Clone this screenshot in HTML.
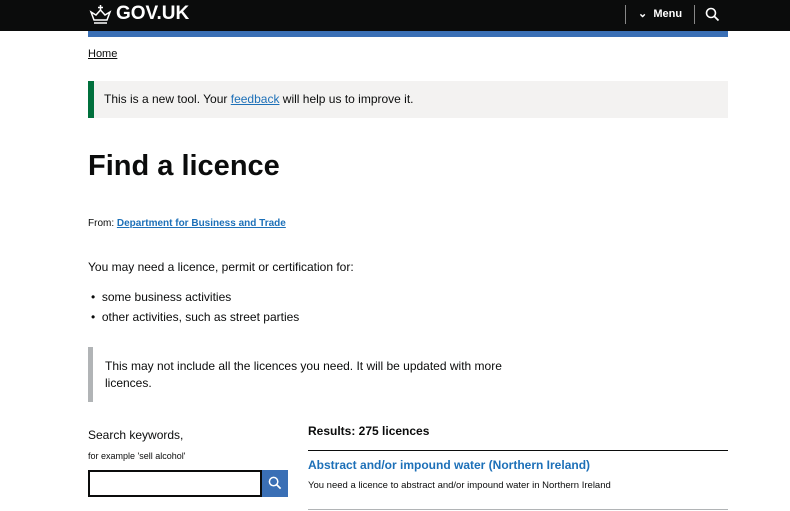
<!DOCTYPE html>
<html><head><style>
*{margin:0;padding:0;box-sizing:border-box}
body{width:790px;height:511px;overflow:hidden;background:#fff;font-family:"Liberation Sans",Arial,sans-serif;color:#0b0c0c;position:relative}
.a{position:absolute}
a{color:#1d70b8;text-decoration:underline}
</style></head><body>
<div class="a" style="left:0;top:0;width:790px;height:31px;background:#0b0c0c"></div>
<div class="a" style="left:88px;top:31px;width:640px;height:6px;background:#3a6fb5"></div>
<svg class="a" style="left:88px;top:5px" width="25" height="20" viewBox="0 0 25 20"><g fill="none" stroke="#fff" stroke-width="1.5"><path d="M3 7 L6 15 H19 L22 7 L17 10 L12.5 5 L8 10 Z"/><path d="M6 18 H19"/><path d="M12.5 0 V5 M10 2.5 H15"/></g></svg>
<div class="a" style="left:116px;top:3px;color:#fff;font-weight:bold;font-size:19px">GOV.UK</div>
<div class="a" style="left:625px;top:5px;width:1px;height:19px;background:#888"></div>
<div class="a" style="left:694px;top:5px;width:1px;height:19px;background:#888"></div>
<div class="a" style="left:638px;top:7px;color:#fff;font-size:11px;font-weight:bold">⌄&nbsp; Menu</div>
<svg class="a" style="left:705px;top:7px" width="15" height="15" viewBox="0 0 15 15"><circle cx="6" cy="6" r="4.5" fill="none" stroke="#fff" stroke-width="1.6"/><path d="M9.5 9.5 L13.5 13.5" stroke="#fff" stroke-width="1.8"/></svg>
<div class="a" style="left:88px;top:48px;font-size:11px"><a style="color:#0b0c0c">Home</a></div>
<div class="a" style="left:88px;top:81px;width:640px;height:37px;background:#f3f2f1;border-left:6px solid #00703c"></div>
<div class="a" style="left:104px;top:92px;font-size:12px">This is a new tool. Your <a>feedback</a> will help us to improve it.</div>
<div class="a" style="left:88px;top:150px;font-size:29px;font-weight:bold">Find a licence</div>
<div class="a" style="left:88px;top:218px;font-size:10px">From: <a style="font-weight:bold">Department for Business and Trade</a></div>
<div class="a" style="left:88px;top:260px;font-size:12px">You may need a licence, permit or certification for:</div>
<div class="a" style="left:91px;top:287px;font-size:12px;line-height:20px">•&nbsp; some business activities<br>•&nbsp; other activities, such as street parties</div>
<div class="a" style="left:88px;top:347px;width:5px;height:55px;background:#b1b4b6"></div>
<div class="a" style="left:105px;top:358px;width:420px;font-size:12px;line-height:17px">This may not include all the licences you need. It will be updated with more licences.</div>
<div class="a" style="left:88px;top:428px;font-size:12px">Search keywords,</div>
<div class="a" style="left:88px;top:451px;font-size:9px">for example 'sell alcohol'</div>
<div class="a" style="left:88px;top:470px;width:174px;height:27px;border:2px solid #0b0c0c"></div>
<div class="a" style="left:262px;top:470px;width:26px;height:27px;background:#3a6fb5"></div>
<svg class="a" style="left:268px;top:476px" width="14" height="14" viewBox="0 0 15 15"><circle cx="6" cy="6" r="4.5" fill="none" stroke="#fff" stroke-width="1.6"/><path d="M9.5 9.5 L13.5 13.5" stroke="#fff" stroke-width="1.8"/></svg>
<div class="a" style="left:308px;top:424px;font-size:12px;font-weight:bold">Results: 275 licences</div>
<div class="a" style="left:308px;top:450px;width:420px;height:1px;background:#0b0c0c"></div>
<div class="a" style="left:308px;top:458px;font-size:12px;font-weight:bold;color:#1d70b8">Abstract and/or impound water (Northern Ireland)</div>
<div class="a" style="left:308px;top:480px;font-size:9.5px">You need a licence to abstract and/or impound water in Northern Ireland</div>
<div class="a" style="left:308px;top:509px;width:420px;height:1px;background:#b1b4b6"></div>
</body></html>
